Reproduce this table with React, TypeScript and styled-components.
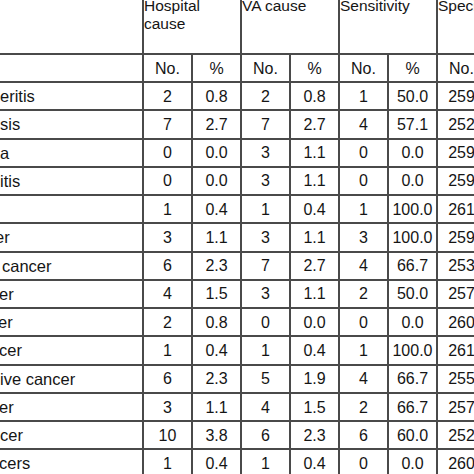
import styled, { createGlobalStyle } from 'styled-components';
import { FC, Fragment } from 'react';

const GlobalStyle = createGlobalStyle`
	html, body {
		margin: 0;
		padding: 0;
		background: #fff;
		overflow: hidden;
	}
`;

interface Row {
	label: string;
	shift: number;
	values: string[];
}

// label fragments: the left part of the first column is cut off in the shot
const rows: Row[] = [
	{ label: 'eritis', shift: 0, values: ['2', '0.8', '2', '0.8', '1', '50.0', '259'] },
	{ label: 'sis', shift: 0, values: ['7', '2.7', '7', '2.7', '4', '57.1', '252'] },
	{ label: 'a', shift: 0, values: ['0', '0.0', '3', '1.1', '0', '0.0', '259'] },
	{ label: 'itis', shift: 0, values: ['0', '0.0', '3', '1.1', '0', '0.0', '259'] },
	{ label: '', shift: 0, values: ['1', '0.4', '1', '0.4', '1', '100.0', '261'] },
	{ label: 'er', shift: -5, values: ['3', '1.1', '3', '1.1', '3', '100.0', '259'] },
	{ label: 'cancer', shift: 2, values: ['6', '2.3', '7', '2.7', '4', '66.7', '253'] },
	{ label: 'er', shift: -1, values: ['4', '1.5', '3', '1.1', '2', '50.0', '257'] },
	{ label: 'er', shift: -2, values: ['2', '0.8', '0', '0.0', '0', '0.0', '260'] },
	{ label: 'cer', shift: -1, values: ['1', '0.4', '1', '0.4', '1', '100.0', '261'] },
	{ label: 'ive cancer', shift: 0, values: ['6', '2.3', '5', '1.9', '4', '66.7', '255'] },
	{ label: 'er', shift: -1, values: ['3', '1.1', '4', '1.5', '2', '66.7', '257'] },
	{ label: 'cer', shift: 0, values: ['10', '3.8', '6', '2.3', '6', '60.0', '252'] },
	{ label: 'cers', shift: -1, values: ['1', '0.4', '1', '0.4', '0', '0.0', '260'] },
];

const groups = ['Hospital cause', 'VA cause', 'Sensitivity', 'Specificity'];

const App: FC = () => {
	return (
		<>
			<GlobalStyle />
			<Viewport>
				<Table>
					<GroupHead $first />
					{groups.map((g) => (
						<GroupHead key={g}>{g}</GroupHead>
					))}

					<SubHead $first />
					{groups.map((g) => (
						<Fragment key={g}>
							<SubHead>No.</SubHead>
							<SubHead>%</SubHead>
						</Fragment>
					))}

					{rows.map((row, i) => (
						<Fragment key={i}>
							<LabelCell $shift={row.shift}>{row.label}</LabelCell>
							{row.values.map((v, j) => (
								<NumCell key={j}>{v}</NumCell>
							))}
							<NumCell />
						</Fragment>
					))}
				</Table>
			</Viewport>
		</>
	);
};

export default App;

const lineColor = '#4a4a4a';

const Viewport = styled.div`
	width: 474px;
	height: 474px;
	overflow: hidden;
	font-family: 'Liberation Sans', Arial, sans-serif;
	font-size: 16px;
	color: #151515;
`;

const Table = styled.div`
	display: grid;
	grid-template-columns: 142px repeat(8, 49px);
	grid-template-rows: 56px 28px repeat(14, 28.28px);
	margin-top: -3px;
`;

const Cell = styled.div<{ $first?: boolean }>`
	box-sizing: border-box;
	border-left: ${(p) => (p.$first ? 'none' : `2px solid ${lineColor}`)};
	border-top: 2px solid ${lineColor};
	min-width: 0;
`;

const GroupHead = styled(Cell)`
	grid-column: span ${(p) => (p.$first ? 1 : 2)};
	border-top: none;
	font-size: 15.5px;
	line-height: 1.15;
	padding: 0;
	text-align: left;
	white-space: normal;
`;

const SubHead = styled(Cell)`
	display: flex;
	align-items: center;
	justify-content: center;
	padding-top: 1px;
`;

const LabelCell = styled(Cell)<{ $shift: number }>`
	border-left: none;
	overflow: hidden;
	white-space: nowrap;
	font-size: 16.5px;
	line-height: 27px;
	text-indent: ${(p) => p.$shift}px;
`;

const NumCell = styled(Cell)`
	display: flex;
	align-items: center;
	justify-content: center;
	white-space: nowrap;
	padding-top: 1px;
`;
